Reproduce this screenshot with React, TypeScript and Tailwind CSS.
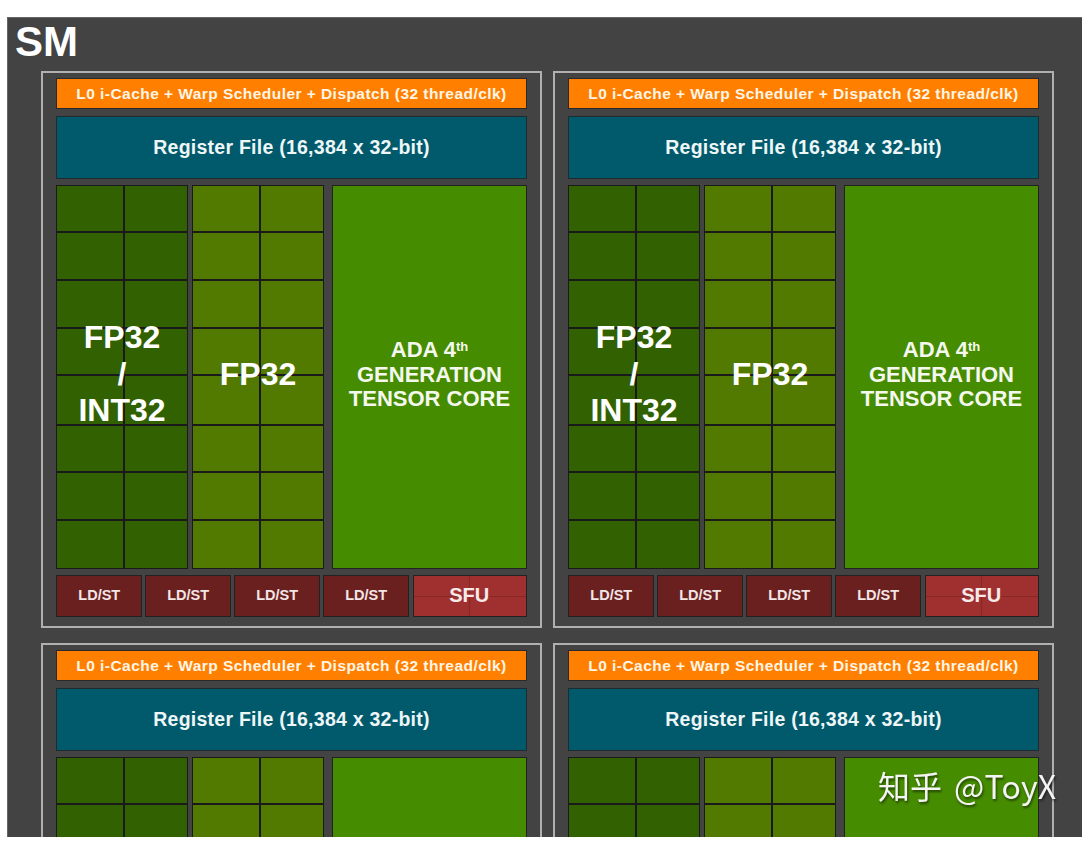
const font = { fontFamily: '"Liberation Sans", Arial, sans-serif' };

function CellGrid({ color, cols }: { color: string; cols: string }) {
  return (
    <div className={`grid h-full w-[132px] grid-rows-[45px_46px_46px_45px_48px_45px_46px_47px] gap-[2px] border border-[#1a1a1a] bg-[#1a1a1a] ${cols}`}>
      {Array.from({ length: 16 }).map((_, i) => (
        <div key={i} className={color} />
      ))}
    </div>
  );
}

function LdSt() {
  return (
    <div className="flex h-full w-[86px] items-center justify-center border border-[#222] bg-[#6b2020] pl-[1px] text-[14.5px] font-bold text-[#f2e6e6]">
      LD/ST
    </div>
  );
}

function Panel({ cutOff = false }: { cutOff?: boolean }) {
  return (
    <div className="h-[557px] w-[501px] shrink-0 border-2 border-[#b0b0b0] px-[13px] pt-[5px]">
      <div className="flex h-[31px] items-center justify-center border border-[#2a2a2a] bg-[#ff8000] text-[15.5px] font-bold tracking-[0.45px] text-[#fff5e6]">
        L0 i-Cache + Warp Scheduler + Dispatch (32 thread/clk)
      </div>
      <div className="mt-[7px] flex h-[63px] items-center justify-center border border-[#1c2c30] bg-[#005a6c] text-[19.5px] font-bold tracking-[0.25px] text-[#eef6f7]">
        Register File (16,384 x 32-bit)
      </div>
      <div className="mt-[6px] flex h-[384px]">
        <div className="relative">
          <CellGrid color="bg-[#316100]" cols="grid-cols-[66px_1fr]" />
          {!cutOff && (
            <div className="absolute inset-0 flex flex-col items-center justify-center pb-[6px] text-center text-[32px] font-bold leading-[36.5px] text-white">
              <span>FP32</span>
              <span>/</span>
              <span>INT32</span>
            </div>
          )}
        </div>
        <div className="relative ml-[4px]">
          <CellGrid color="bg-[#527a00]" cols="grid-cols-[66px_1fr]" />
          {!cutOff && (
            <div className="absolute inset-0 flex items-center justify-center pb-[7px] text-[32px] font-bold text-white">
              FP32
            </div>
          )}
        </div>
        <div className="ml-[8px] flex h-full w-[195px] items-center justify-center border border-[#222] bg-[#468c00] pb-[4px] text-center text-[22px] font-bold leading-[24.5px] text-[#f4f8ee]">
          {!cutOff && (
            <div>
              ADA 4<sup className="text-[13px] leading-none">th</sup>
              <br />
              GENERATION
              <br />
              TENSOR CORE
            </div>
          )}
        </div>
      </div>
      {!cutOff && (
        <div className="mt-[6px] flex h-[42px]">
          <LdSt />
          <div className="ml-[3px] h-full"><LdSt /></div>
          <div className="ml-[3px] h-full"><LdSt /></div>
          <div className="ml-[3px] h-full"><LdSt /></div>
          <div className="relative ml-[4px] flex h-full w-[115px] items-center justify-center border border-[#222] bg-[#a03030] pb-[2px] pr-[1px] text-[20px] font-bold text-[#f7eaea]">
            <div className="absolute bottom-0 left-[55px] top-0 w-px bg-[#842828]" />
            <div className="absolute left-0 right-0 top-[20px] h-px bg-[#842828]" />
            <span className="relative">SFU</span>
          </div>
        </div>
      )}
    </div>
  );
}

export default function App() {
  return (
    <div className="h-[845px] w-[1082px] overflow-hidden bg-white pt-[17px]" style={font}>
      <div className="relative ml-[7px] h-[820px] overflow-hidden border-l border-t border-[#666] bg-[#434343] pl-[33px]">
        <div className="h-[53px] pt-[1px]">
          <h1 className="-ml-[26px] text-[42px] font-bold leading-[46px] text-white">SM</h1>
        </div>
        <div className="flex flex-col gap-[15px]">
          <div className="flex gap-[11px]">
            <Panel />
            <Panel />
          </div>
          <div className="flex gap-[11px]">
            <Panel cutOff />
            <Panel cutOff />
          </div>
        </div>
        <div
          className="absolute left-[870px] top-[748px] text-[32px] leading-[38px] text-[#f4f4f4] drop-shadow-[1px_2px_1px_rgba(0,0,0,0.5)]"
          style={{ fontFamily: '"Noto Sans CJK SC", "Noto Sans", sans-serif' }}
        >
          知乎<span className="ml-[12px] tracking-[0.2px]">@ToyX</span>
        </div>
      </div>
    </div>
  );
}
